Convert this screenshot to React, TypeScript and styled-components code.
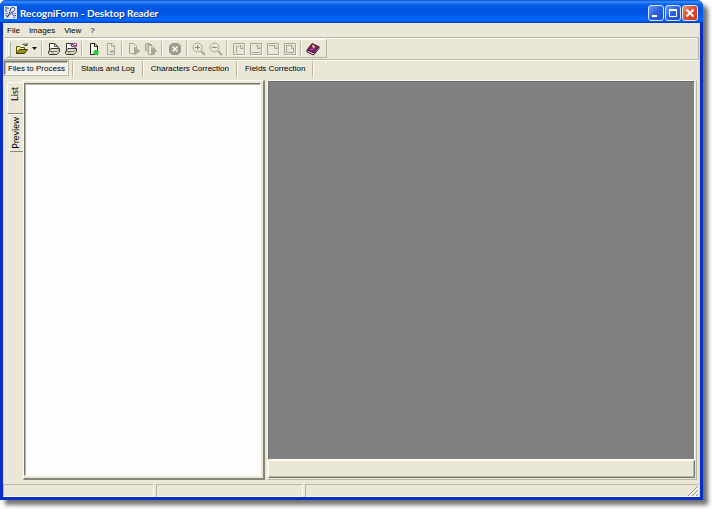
import React, { useState } from "react";
import styled, { createGlobalStyle, css } from "styled-components";

const face = "#eae7d7";
const light = "#fbfaf3";
const shade = "#b9b6a6";
const dark = "#8a8878";

const GlobalStyle = createGlobalStyle`
  * { box-sizing: border-box; }
  html, body { margin: 0; background: #fdfdfd; overflow: hidden; }
  button { font: inherit; color: inherit; margin: 0; padding: 0; border: 0; background: none; }
`;

const Desktop = styled.div`
  height: 100vh;
  padding: 0 9px 9px 0;
  font: 8px/12px "Liberation Sans", Arial, sans-serif;
  color: #000;
`;

const Window = styled.main`
  height: 100%;
  display: flex;
  flex-direction: column;
  background: ${face};
  border: solid #0831c4;
  border-width: 0 3px 3px;
  border-radius: 6px 6px 0 0;
  box-shadow: inset 1px 0 #c9dcf2, inset -1px 0 #c9dcf2, inset 0 -1px #c9dcf2,
    5px 5px 4px rgba(0, 0, 0, 0.55);
`;

const TitleBar = styled.header`
  flex: none;
  height: 23px;
  margin: 0 -3px;
  padding: 2px 5px 0 4px;
  display: flex;
  align-items: center;
  gap: 2px;
  border-radius: 6px 6px 0 0;
  background: linear-gradient(#0a4fd0 0, #3890fc 2px, #0a62ec 4px, #0054e0 9px, #0058e8 15px, #0366fb 19px, #0460f2 21px, #0238b0 23px);
`;

const Title = styled.h1`
  flex: 1;
  margin: 0;
  font: bold 10px/14px Lato, sans-serif;
  color: #fff;
  text-shadow: 1px 1px #0b3596;
  white-space: nowrap;
`;

const CaptionButtons = styled.div`
  display: flex;
  gap: 1px;
`;

const CaptionButton = styled.button<{ $close?: boolean }>`
  width: 16px;
  height: 16px;
  display: grid;
  place-items: center;
  border: 1px solid #d9e7fb;
  border-radius: 3px;
  background: ${(p) =>
    p.$close
      ? "linear-gradient(135deg, #ee9270, #dc5030 45%, #c53715)"
      : "linear-gradient(135deg, #6b9bf5, #2e62e4 45%, #1b4cd0)"};
`;

const MenuBar = styled.nav`
  flex: none;
  height: 14px;
  display: flex;
  gap: 9px;
  padding: 1px 4px 0;
`;

const MenuItem = styled.button`
  line-height: 13px;
`;

const CoolBar = styled.div`
  flex: none;
  height: 23px;
  margin: 0 1px;
  display: flex;
  border: 1px solid ${shade};
  border-width: 1px 1px 1px 0;
  box-shadow: inset 0 1px ${light}, 0 1px ${light};
  padding: 1px 0 1px 2px;
`;

const ToolBar = styled.div`
  display: flex;
  align-items: center;
  padding: 0 5px 0 1px;
  border: 1px solid;
  border-color: ${light} ${shade} ${shade} ${light};
`;

const Grip = styled.span`
  width: 3px;
  height: 16px;
  margin-right: 2px;
  border: 1px solid;
  border-color: ${light} ${shade} ${shade} ${light};
`;

const ToolButton = styled.button<{ $size?: "arrow" | "wide" }>`
  width: ${(p) => (p.$size === "arrow" ? 9 : p.$size === "wide" ? 19 : 17)}px;
  height: 17px;
  display: grid;
  place-items: center;
`;

const ToolSeparator = styled.span`
  width: 2px;
  height: 15px;
  margin: 0 2px;
  border-left: 1px solid ${shade};
  border-right: 1px solid ${light};
`;

const PageTabs = styled.div`
  flex: none;
  height: 18px;
  display: flex;
  align-items: flex-start;
  padding: 1px 1px 0;
`;

const PageTab = styled.button<{ $active: boolean }>`
  height: 14px;
  line-height: 13px;
  white-space: nowrap;
  ${(p) =>
    p.$active
      ? css`
          margin-right: 4px;
          padding: 0 2px 0 3px;
          border: 1px solid;
          border-color: #77776c ${light} ${light} #77776c;
          box-shadow: inset 1px 1px ${shade}, 0 0 0 1px ${shade};
          background: #f3f1e8;
        `
      : css`
          padding: 0 7px;
        `}
`;

const TabSeparator = styled.span`
  width: 2px;
  height: 16px;
  border-left: 1px solid ${shade};
  border-right: 1px solid ${light};
`;

const Workspace = styled.section`
  flex: 1;
  min-height: 0;
  display: flex;
  margin: 0 3px;
  padding: 2px 0 4px;
`;

const SideTabs = styled.div`
  flex: none;
  width: 17px;
  padding-top: 2px;
  display: flex;
  flex-direction: column;
  align-items: flex-end;
`;

const SideTab = styled.button<{ $active: boolean }>`
  width: ${(p) => (p.$active ? 16 : 14)}px;
  padding: ${(p) => (p.$active ? "4px 2px 12px 0" : "2px 2px 2px 0")};
  display: flex;
  justify-content: center;
  border-top: 1px solid ${light};
  border-left: 1px solid ${light};
  border-bottom: 1px solid ${dark};
  border-radius: 2px 0 0 2px;
`;

const SideLabel = styled.span`
  writing-mode: vertical-rl;
  rotate: 180deg;
  font: 9px/11px Lato, sans-serif;
`;

const ListFrame = styled.div`
  flex: 0 0 35%;
  padding: 2px 2px 2px 0;
  border: solid;
  border-width: 1px 2px 2px 1px;
  border-color: ${light} #86857a #86857a ${light};
`;

const FileList = styled.div`
  height: 100%;
  background: #fefefe;
  border: 1px solid;
  border-color: #77776c ${light} ${light} #77776c;
  box-shadow: inset 1px 1px ${shade};
`;

const Viewer = styled.div`
  flex: 1;
  min-width: 0;
  margin-left: 2px;
  display: flex;
  flex-direction: column;
  padding: 0 1px 1px 0;
  border: 1px solid;
  border-color: ${light} ${shade} ${shade} ${light};
`;

const ImageArea = styled.div`
  flex: 1;
  background: #808080;
  border: 1px solid;
  border-color: #6c6c6c ${light} ${light} #6c6c6c;
`;

const ViewerFooter = styled.div`
  flex: none;
  height: 18px;
  border: 1px solid;
  border-color: ${light} #77776c #77776c ${light};
  box-shadow: inset -1px -1px ${shade};
`;

const StatusBar = styled.footer`
  flex: none;
  height: 13px;
  margin: 0 1px 0 0;
  display: grid;
  grid-template-columns: 151fr 148fr 395fr;
  gap: 2px;
`;

const StatusPanel = styled.div`
  display: flex;
  justify-content: flex-end;
  align-items: flex-end;
  border: 1px solid;
  border-color: ${shade} ${light} ${light} ${shade};
`;

const Svg = ({ size = 14, children }: { size?: number; children: React.ReactNode }) => (
  <svg width={size} height={size} viewBox={`0 0 ${size} ${size}`} fill="none" aria-hidden="true">
    {children}
  </svg>
);

const gray = "#aaa798";

const OpenIcon = () => (
  <Svg>
    <path d="M1.5 11.5V4.5H4.5L5.5 5.5H9.5V7.5" fill="#f7ee75" stroke="#55520b" />
    <path d="M1.5 11.5L4.5 7.5H12.5L9.5 11.5Z" fill="#9b9312" stroke="#3b390a" />
    <path d="M7.5 3C8.5 1.5 10 1.5 11.5 3.5M9.5 3.5H12V1" stroke="#333" />
  </Svg>
);

const ScanIcon = ({ multi }: { multi?: boolean }) => (
  <Svg>
    <path d="M2.5 9V1.5H7.5L11 4.5V8" fill="#fbfbf6" stroke="#333" />
    <path d="M7.5 1.5V4.5H11" stroke="#555" />
    <path d="M1.5 9.5L4 6.5H12.5V9.5L10 12.5H2.5L1.5 11.5Z" fill="#dedfcd" stroke="#333" />
    <path d="M2 9.5H10L12 7.5" stroke="#777" />
    <path d="M4 11H7" stroke="#a3a335" />
    {multi && <path d="M6 3.5L8 1.5H11.5M8.5 5L12 3.5M12.5 1V5" stroke="#9a3b83" />}
  </Svg>
);

const PageIcon = ({ mode }: { mode: "add" | "remove" }) => {
  const line = mode === "add" ? "#222" : gray;
  return (
    <Svg>
      <path d="M3.5 1.5H8L10.5 4V12.5H3.5Z" fill={mode === "add" ? "#f5f5ec" : face} stroke={line} />
      <path d="M7.5 1.5V4.5H10.5" stroke={line} />
      {mode === "add" ? (
        <path d="M9 8V13M6.5 10.5H11.5" stroke="#22d038" strokeWidth="3" />
      ) : (
        <path d="M6 9.5H10" stroke={gray} strokeWidth="2" />
      )}
    </Svg>
  );
};

const RunIcon = ({ multi }: { multi?: boolean }) => (
  <Svg>
    {multi && <path d="M1.5 9V1.5H6M3 10V2.5H8" stroke={gray} />}
    <path d={multi ? "M4.5 3.5H8L10.5 6V12.5H4.5Z" : "M2.5 1.5H7L9.5 4V11.5H2.5Z"} fill={face} stroke={gray} />
    <path d="M7 4.5L13.5 9L7 13.5Z" fill={gray} />
  </Svg>
);

const StopIcon = () => (
  <Svg>
    <path d="M4 1H10L13 4V10L10 13H4L1 10V4Z" fill="#9d9b8f" />
    <path d="M4.5 4.5L9.5 9.5M9.5 4.5L4.5 9.5" stroke={light} strokeWidth="1.5" />
  </Svg>
);

const ZoomIcon = ({ plus }: { plus?: boolean }) => (
  <Svg>
    <circle cx="5.5" cy="5.5" r="4.5" stroke={gray} />
    <path d="M9 9L13 13" stroke={gray} strokeWidth="2" />
    <path d={plus ? "M3 5.5H8M5.5 3V8" : "M3 5.5H8"} stroke="#8d8b7d" />
  </Svg>
);

const fitMarks = [
  "M4.5 11V4.5H7M7.5 3.5H9L11 5.5V7M8.5 3.5V6.5H11",
  "M3 10.5H11M7.5 3.5H9L11 5.5V7M8.5 3.5V6.5H11",
  "M3 3.5H9L11 5.5V7M8.5 3.5V6.5H11",
  "M3.5 3.5H9L10.5 5.5V10.5H3.5ZM8.5 3.5V6.5H11",
];

const FitIcon = ({ mark }: { mark: string }) => (
  <Svg>
    <path d="M1.5 1.5H12.5V12.5H1.5Z" stroke={gray} />
    <path d="M2.5 13.5H13.5V2.5" stroke={light} />
    <path d={mark} stroke={gray} />
  </Svg>
);

const BookIcon = () => (
  <Svg>
    <path d="M1 8L6 1.5L12.5 4.5L8 11Z" fill="#80206e" stroke="#45113f" />
    <path d="M1 8V10L7.5 13L13 6.5V4.5L8 11Z" fill="#f2d8d4" stroke="#45113f" />
    <path d="M6 4C8 3.5 9 5 7 6M5.5 7.5L6 8" stroke="#ffcc3d" strokeWidth="1.5" />
  </Svg>
);

const AppIcon = () => (
  <Svg>
    <path d="M0 0H13V13H0Z" fill="#dfe7f6" />
    <path d="M3 6C0 3 3 1 5 2.5M3 11.5C5 9 6 6 6.5 3M6 3C9 0 12 2 10.5 4.5C10 6 8 6 7 6.5C9 6 8 11 12 9.5M1.5 9C3 12 6 9 7 7" stroke="#34387a" />
    <path d="M1 1.5H3M10 7.5H12M1 7.5H4M9 11.5H11" stroke="#7184bb" />
  </Svg>
);

type Tool = { label: string; icon: React.ReactNode; size?: "arrow" | "wide"; disabled?: boolean };

const toolGroups: Tool[][] = [
  [
    { label: "Open", icon: <OpenIcon /> },
    { label: "Open options", size: "arrow", icon: <Svg size={5}><path d="M0 1H5L2.5 4Z" fill="#111" /></Svg> },
  ],
  [
    { label: "Scan page", icon: <ScanIcon /> },
    { label: "Scan pages", icon: <ScanIcon multi /> },
  ],
  [
    { label: "Add image", icon: <PageIcon mode="add" /> },
    { label: "Remove image", icon: <PageIcon mode="remove" />, disabled: true },
  ],
  [
    { label: "Process", icon: <RunIcon />, disabled: true },
    { label: "Process all", icon: <RunIcon multi />, disabled: true },
  ],
  [{ label: "Stop", icon: <StopIcon />, size: "wide", disabled: true }],
  [
    { label: "Zoom in", icon: <ZoomIcon plus />, disabled: true },
    { label: "Zoom out", icon: <ZoomIcon />, disabled: true },
  ],
  fitMarks.map((mark, i) => ({ label: `Fit mode ${i + 1}`, icon: <FitIcon mark={mark} />, disabled: true })),
  [{ label: "Help", icon: <BookIcon /> }],
];

const pages = ["Files to Process", "Status and Log", "Characters Correction", "Fields Correction"];

export default function App() {
  const [page, setPage] = useState(pages[0]);
  const [side, setSide] = useState("List");

  return (
    <>
      <GlobalStyle />
      <Desktop>
        <Window>
          <TitleBar>
            <AppIcon />
            <Title>RecogniForm - Desktop Reader</Title>
            <CaptionButtons>
              <CaptionButton aria-label="Minimize">
                <Svg size={12}><path d="M2 9H7" stroke="#fff" strokeWidth="2" /></Svg>
              </CaptionButton>
              <CaptionButton aria-label="Maximize">
                <Svg size={12}><path d="M2.5 3.5H9.5V9.5H2.5ZM2 2.5H10" stroke="#fff" /></Svg>
              </CaptionButton>
              <CaptionButton $close aria-label="Close">
                <Svg size={12}><path d="M2.5 2.5L9.5 9.5M9.5 2.5L2.5 9.5" stroke="#fff" strokeWidth="2" /></Svg>
              </CaptionButton>
            </CaptionButtons>
          </TitleBar>
          <MenuBar>
            {["File", "Images", "View", "?"].map((m) => <MenuItem key={m}>{m}</MenuItem>)}
          </MenuBar>
          <CoolBar>
            <ToolBar role="toolbar">
              <Grip />
              {toolGroups.map((group, i) => (
                <React.Fragment key={i}>
                  {i > 0 && <ToolSeparator />}
                  {group.map((t) => (
                    <ToolButton key={t.label} aria-label={t.label} $size={t.size} disabled={t.disabled}>
                      {t.icon}
                    </ToolButton>
                  ))}
                </React.Fragment>
              ))}
            </ToolBar>
          </CoolBar>
          <PageTabs role="tablist">
            {pages.map((p) => (
              <React.Fragment key={p}>
                <PageTab role="tab" aria-selected={p === page} $active={p === page} onClick={() => setPage(p)}>
                  {p}
                </PageTab>
                <TabSeparator />
              </React.Fragment>
            ))}
          </PageTabs>
          <Workspace>
            <SideTabs role="tablist">
              {["List", "Preview"].map((s) => (
                <SideTab key={s} role="tab" aria-selected={s === side} $active={s === side} onClick={() => setSide(s)}>
                  <SideLabel>{s}</SideLabel>
                </SideTab>
              ))}
            </SideTabs>
            <ListFrame><FileList /></ListFrame>
            <Viewer>
              <ImageArea />
              <ViewerFooter />
            </Viewer>
          </Workspace>
          <StatusBar>
            <StatusPanel />
            <StatusPanel />
            <StatusPanel>
              <Svg size={10}>
                <path d="M0 10L10 0M4 10L10 4M8 10L10 8" stroke="#96948a" />
                <path d="M2 10L10 2M6 10L10 6" stroke={light} />
              </Svg>
            </StatusPanel>
          </StatusBar>
        </Window>
      </Desktop>
    </>
  );
}
